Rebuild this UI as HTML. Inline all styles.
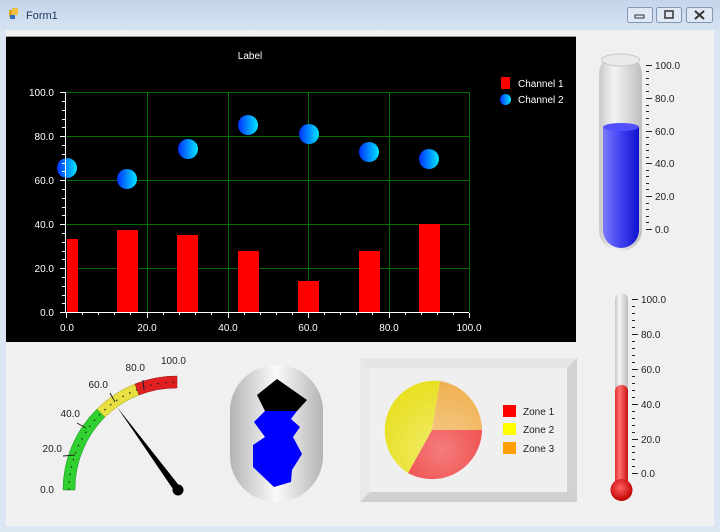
<!DOCTYPE html>
<html><head><meta charset="utf-8"><style>
html,body{margin:0;padding:0;width:720px;height:532px;overflow:hidden;background:#dbe6f3;font-family:"Liberation Sans",sans-serif}
svg{position:absolute;left:0;top:0}
</style></head><body>
<svg width="720" height="532" viewBox="0 0 720 532" font-family="Liberation Sans, sans-serif">
<defs>
<linearGradient id="tb" x1="0" y1="0" x2="0" y2="1"><stop offset="0" stop-color="#c4d5ea"/><stop offset="1" stop-color="#d6e3f2"/></linearGradient>
<linearGradient id="ball" x1="0" y1="0" x2="1" y2="0"><stop offset="0" stop-color="#0030ff"/><stop offset="1" stop-color="#00e8ff"/></linearGradient>
<linearGradient id="caps" x1="0" y1="0" x2="1" y2="0"><stop offset="0" stop-color="#b4b4b4"/><stop offset="0.5" stop-color="#fafafa"/><stop offset="1" stop-color="#b4b4b4"/></linearGradient>
<linearGradient id="tube" x1="0" y1="0" x2="1" y2="0"><stop offset="0" stop-color="#c8c8c8"/><stop offset="0.35" stop-color="#f4f4f4"/><stop offset="1" stop-color="#bdbdbd"/></linearGradient>
<linearGradient id="blue" x1="0" y1="0" x2="1" y2="0"><stop offset="0" stop-color="#7a7aff"/><stop offset="0.5" stop-color="#4040f0"/><stop offset="1" stop-color="#1010d0"/></linearGradient>
<linearGradient id="red" x1="0" y1="0" x2="1" y2="0"><stop offset="0" stop-color="#e03030"/><stop offset="0.35" stop-color="#ff7070"/><stop offset="1" stop-color="#c81010"/></linearGradient>
<radialGradient id="bulb" cx="0.45" cy="0.4" r="0.6"><stop offset="0" stop-color="#ff6060"/><stop offset="1" stop-color="#c00000"/></radialGradient>
<radialGradient id="pieg" cx="0.6" cy="0.7" r="0.7"><stop offset="0" stop-color="#fff" stop-opacity="0.35"/><stop offset="1" stop-color="#fff" stop-opacity="0"/></radialGradient>
</defs>
<rect x="0" y="0" width="720" height="532" fill="#dbe6f3"/>
<rect x="0" y="0" width="720" height="30" fill="url(#tb)"/>
<rect x="9" y="10" width="6" height="7" fill="#e0a020"/><rect x="12" y="8" width="6" height="7" fill="#f0c040"/><rect x="10" y="15" width="5" height="4" fill="#3070c0"/>
<text x="26" y="19" font-size="11" fill="#1e395b">Form1</text>
<g fill="#dfe8f4" stroke="#8197b6"><rect x="627.5" y="7.5" width="25" height="15" rx="2"/><rect x="656.5" y="7.5" width="25" height="15" rx="2"/><rect x="686.5" y="7.5" width="26" height="15" rx="2"/></g>
<rect x="635" y="15" width="9" height="3" fill="none" stroke="#333" stroke-width="1"/>
<rect x="665" y="11" width="8" height="7" fill="none" stroke="#333" stroke-width="1.5"/>
<path d="M695 11 L704 19 M704 11 L695 19" stroke="#333" stroke-width="2"/>
<rect x="6" y="30" width="708" height="496" fill="#f0f0f0"/>
<rect x="6" y="36" width="570" height="1" fill="#999"/>
<rect x="6" y="37" width="570" height="305" fill="#000"/>
<text x="250" y="59" font-size="10" fill="#fff" text-anchor="middle">Label</text>
<g stroke="#007000" stroke-width="1" fill="none">
<path d="M66.5 92.5H469.5M66.5 136.5H469.5M66.5 180.5H469.5M66.5 224.5H469.5M66.5 268.5H469.5"/>
<path d="M147.5 92V312M228.5 92V312M308.5 92V312M389.5 92V312M469.5 92V312"/>
</g>
<g fill="#ff0000">
<rect x="67" y="239" width="11" height="73"/>
<rect x="117" y="230" width="21" height="82"/>
<rect x="177" y="235" width="21" height="77"/>
<rect x="238" y="251" width="21" height="61"/>
<rect x="298" y="281" width="21" height="31"/>
<rect x="359" y="251" width="21" height="61"/>
<rect x="419" y="224" width="21" height="88"/>
</g>
<g fill="url(#ball)">
<circle cx="67" cy="168" r="10"/><circle cx="127" cy="179" r="10"/><circle cx="188" cy="149" r="10"/><circle cx="248" cy="125" r="10"/><circle cx="309" cy="134" r="10"/><circle cx="369" cy="152" r="10"/><circle cx="429" cy="159" r="10"/>
</g>
<rect x="58" y="70" width="8" height="22" fill="#000"/>
<g stroke="#fff" stroke-width="1" fill="none">
<path d="M65.5 92V312.5H469"/>
<path d="M60 92.5H65M60 136.5H65M60 180.5H65M60 224.5H65M60 268.5H65M60 312.5H65"/>
<path d="M62 101.5H65M62 110.5H65M62 119.5H65M62 127.5H65M62 145.5H65M62 154.5H65M62 163.5H65M62 171.5H65M62 189.5H65M62 198.5H65M62 207.5H65M62 215.5H65M62 233.5H65M62 242.5H65M62 251.5H65M62 259.5H65M62 277.5H65M62 286.5H65M62 295.5H65M62 303.5H65"/>
<path d="M66.5 313V318M147.5 313V318M228.5 313V318M308.5 313V318M389.5 313V318M469.5 313V318"/>
<path d="M82.5 313V315M98.5 313V315M114.5 313V315M130.5 313V315M163.5 313V315M179.5 313V315M195.5 313V315M211.5 313V315M244.5 313V315M260.5 313V315M276.5 313V315M292.5 313V315M324.5 313V315M340.5 313V315M356.5 313V315M372.5 313V315M405.5 313V315M421.5 313V315M437.5 313V315M453.5 313V315"/>
</g>
<g font-size="10" fill="#fff" text-anchor="end">
<text x="54" y="96">100.0</text><text x="54" y="140">80.0</text><text x="54" y="184">60.0</text><text x="54" y="228">40.0</text><text x="54" y="272">20.0</text><text x="54" y="316">0.0</text>
</g>
<g font-size="10" fill="#fff" text-anchor="middle">
<text x="67" y="331">0.0</text><text x="147" y="331">20.0</text><text x="228" y="331">40.0</text><text x="308" y="331">60.0</text><text x="389" y="331">80.0</text><text x="469" y="331">100.0</text>
</g>
<rect x="501" y="77" width="9" height="12" fill="#f00"/>
<circle cx="505.5" cy="99.5" r="5.5" fill="url(#ball)"/>
<text x="518" y="87" font-size="10" fill="#fff">Channel 1</text>
<text x="518" y="103" font-size="10" fill="#fff">Channel 2</text>
<rect x="599" y="53" width="43" height="198" rx="21" fill="url(#tube)"/>
<ellipse cx="620.5" cy="60" rx="19" ry="6" fill="#eaeaea" stroke="#c8c8c8"/>
<path d="M603 127 Q621 122 639 127 V230 A18 18 0 0 1 603 230 Z" fill="url(#blue)"/>
<ellipse cx="621" cy="127" rx="18" ry="4" fill="#5050ff"/>
<g stroke="#222" stroke-width="1" fill="none">
<path d="M646 65.5H652M646 98.5H652M646 131.5H652M646 163.5H652M646 196.5H652M646 229.5H652"/>
<path d="M646 71.5H649M646 78.5H649M646 84.5H649M646 91.5H649M646 105.5H649M646 111.5H649M646 118.5H649M646 124.5H649M646 137.5H649M646 144.5H649M646 150.5H649M646 157.5H649M646 170.5H649M646 176.5H649M646 183.5H649M646 189.5H649M646 203.5H649M646 209.5H649M646 216.5H649M646 222.5H649"/>
</g>
<g font-size="10" fill="#222"><text x="655" y="69">100.0</text><text x="655" y="102">80.0</text><text x="655" y="135">60.0</text><text x="655" y="167">40.0</text><text x="655" y="200">20.0</text><text x="655" y="233">0.0</text></g>
<rect x="615" y="293" width="13" height="195" rx="6.5" fill="url(#tube)"/>
<rect x="615" y="385" width="13" height="103" rx="6" fill="url(#red)"/>
<circle cx="621.5" cy="490" r="11" fill="url(#bulb)"/>
<g stroke="#222" stroke-width="1" fill="none">
<path d="M632 299.5H638M632 334.5H638M632 369.5H638M632 404.5H638M632 439.5H638M632 473.5H638"/>
<path d="M632 306.5H635M632 313.5H635M632 320.5H635M632 327.5H635M632 341.5H635M632 348.5H635M632 355.5H635M632 362.5H635M632 376.5H635M632 383.5H635M632 390.5H635M632 397.5H635M632 411.5H635M632 418.5H635M632 425.5H635M632 432.5H635M632 446.5H635M632 452.5H635M632 459.5H635M632 466.5H635"/>
</g>
<g font-size="10" fill="#222"><text x="641" y="303">100.0</text><text x="641" y="338">80.0</text><text x="641" y="373">60.0</text><text x="641" y="408">40.0</text><text x="641" y="443">20.0</text><text x="641" y="477">0.0</text></g>
<path d="M63 490 A114 114 0 0 1 97 409 L105 417 A102 102 0 0 0 75 490 Z" fill="#30d030" stroke="#1a8a1a" stroke-width="0.5"/>
<path d="M97 409 A114 114 0 0 1 135 384 L139 395 A102 102 0 0 0 105 417 Z" fill="#e8e040" stroke="#a0a010" stroke-width="0.5"/>
<path d="M135 384 A114 114 0 0 1 177 376 L177 388 A102 102 0 0 0 139 395 Z" fill="#e02020" stroke="#901010" stroke-width="0.5"/>
<g stroke="#222" stroke-width="1.2" fill="none" stroke-dasharray="1.5 6">
<path d="M69 490 A108 108 0 0 1 177 382"/>
</g>
<path d="M63 456 L75 455 M77 423 L86 428 M110 393 L115 402 M143 380 L144 390" stroke="#222" stroke-width="1" fill="none"/>
<g font-size="10" fill="#222" text-anchor="end">
<text x="54" y="493">0.0</text><text x="62" y="452">20.0</text><text x="80" y="417">40.0</text><text x="108" y="388">60.0</text><text x="145" y="371">80.0</text><text x="186" y="364">100.0</text>
</g>
<path d="M117 407 L181 488 L175 492 Z" fill="#000"/>
<circle cx="178" cy="490" r="5.5" fill="#000"/>
<rect x="230" y="365" width="93" height="137" rx="46" fill="url(#caps)"/>
<polygon points="277,379 307,400 297,411 265,411 257,395" fill="#000"/>
<polygon points="265,411 297,411 291,419 300,427 293,437 302,454 292,470 291,482 274,487 253,467 253,445 265,437 254,422" fill="#0000ff"/>
<rect x="360" y="358" width="217" height="144" fill="#dcdcdc"/>
<polygon points="360,358 577,358 567,368 370,368" fill="#e6e6e6"/>
<polygon points="360,358 370,368 370,492 360,502" fill="#e9e9e9"/>
<polygon points="577,358 577,502 567,492 567,368" fill="#d2d2d2"/>
<polygon points="360,502 577,502 567,492 370,492" fill="#d0d0d0"/>
<rect x="370" y="368" width="197" height="124" fill="#efefef"/>
<path d="M432 430 L482 430 A50 50 0 0 1 408 473 Z" fill="#ee3838"/>
<path d="M432 430 L408 473 A50 50 0 0 1 440 381 Z" fill="#e8e020"/>
<path d="M432 430 L440 381 A50 50 0 0 1 482 430 Z" fill="#f0b050"/>
<circle cx="432" cy="430" r="50" fill="url(#pieg)"/>
<rect x="503" y="405" width="13" height="12" fill="#f00"/>
<rect x="503" y="423" width="13" height="12" fill="#ff0"/>
<rect x="503" y="442" width="13" height="12" fill="#ffa000"/>
<g font-size="10" fill="#222"><text x="523" y="415">Zone 1</text><text x="523" y="433">Zone 2</text><text x="523" y="452">Zone 3</text></g>
</svg>
</body></html>
